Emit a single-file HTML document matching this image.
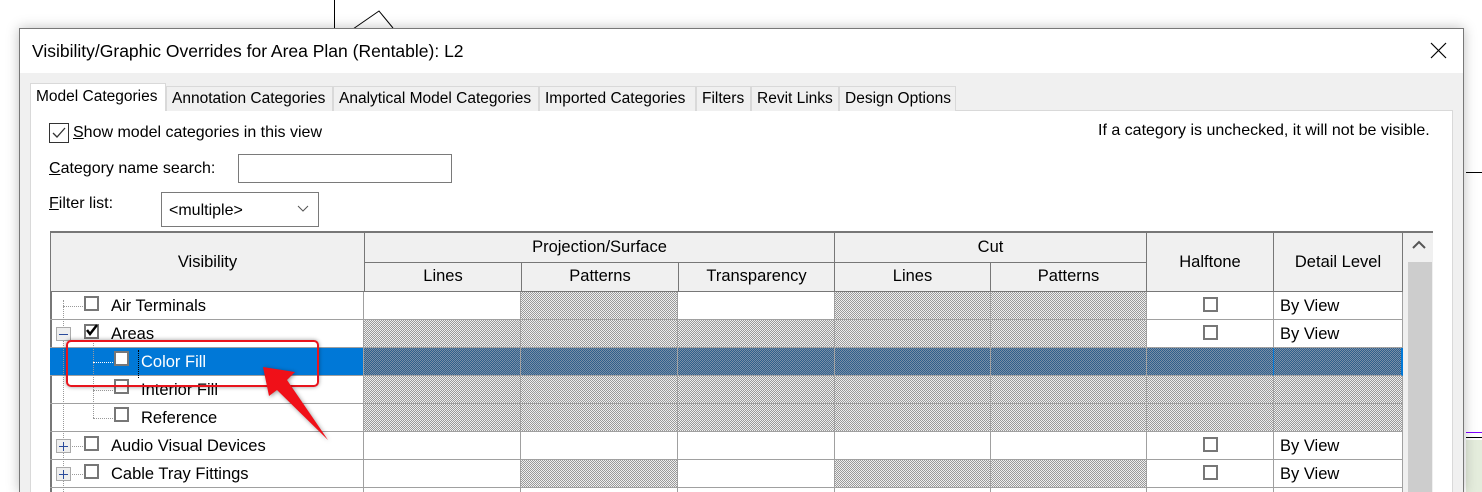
<!DOCTYPE html>
<html style="width:1482px;height:492px;overflow:hidden"><head><meta charset="utf-8"><style>
*{box-sizing:border-box;margin:0;padding:0}
body{width:1482px;height:492px;overflow:hidden;background:#fff;font-family:"Liberation Sans",sans-serif;font-size:16px;color:#000;position:relative}
.a{position:absolute}
.dlg{left:19px;top:28px;width:1445px;height:464px;border:1px solid #777;border-bottom:none;background:#f0f0f0;box-shadow:0 0 12px rgba(0,0,0,.25)}
.tb{left:0;top:0;width:1443px;height:44px;background:#fff}
.tab{top:57px;height:25px;border:1px solid #d9d9d9;border-bottom:none;background:#f0f0f0;padding:3px 0 0 5px;font-size:15.5px;white-space:nowrap}
.panel{left:10px;top:81px;width:1423px;height:383px;background:#fff;border:1px solid #d9d9d9;border-bottom:none}
.cb{width:15px;height:15px;border:2px solid #777;background:#fff}
.row{position:absolute;left:50px;height:28px;display:flex}
.c{height:28px;border-right:1px solid #a0a0a0;border-bottom:1px solid #a0a0a0;position:relative;font-size:16.5px}
.h{background:repeating-conic-gradient(#9a9a9a 0 25%,#efefef 0 50%) 0 0/2px 2px}
.hs{background:repeating-conic-gradient(#2f5f8c 0 25%,#7a8fa6 0 50%) 0 0/2px 2px}
.w0{width:314px}.w1{width:157px}.w4{width:156px}.w6{width:127px}.w7{width:129px}
.hc{position:absolute;background:#f0f0f0;border-right:1px solid #777;border-bottom:1px solid #777;text-align:center;font-size:16.5px}
.bv{padding:5px 0 0 6px}
.hb{position:absolute;left:56px;top:5px}
.dot{position:absolute;border-color:#999;border-style:dotted;border-width:0}
</style></head><body>
<div class="a" style="left:334px;top:0;width:1px;height:28px;background:#000"></div>
<svg class="a" style="left:350px;top:8px" width="50" height="22"><path d="M3 21 L29 3 L43 20" fill="none" stroke="#000"/></svg>
<div class="a" style="left:1466px;top:172px;width:16px;height:1px;background:#000"></div>
<div class="a" style="left:1466px;top:432px;width:16px;height:1px;background:#8000ff"></div>
<div class="a" style="left:1466px;top:437px;width:16px;height:1px;background:#000"></div>
<div class="a" style="left:1466px;top:440px;width:16px;height:52px;background:#e4ecdc"></div>

<div class="a dlg">
 <div class="a tb"></div>
 <div class="a" style="left:12px;top:12px;font-size:17.5px;white-space:nowrap">Visibility/Graphic Overrides for Area Plan (Rentable): L2</div>
 <svg class="a" style="left:1410px;top:13px" width="18" height="18"><path d="M1 1L16 16M16 1L1 16" stroke="#000" stroke-width="1.2"/></svg>
 <div class="a panel"></div>
 <div class="a tab" style="left:10px;top:54px;height:28px;width:136px;background:#fff;border-color:#d9d9d9;padding-top:4px">Model Categories</div>
 <div class="a tab" style="left:146px;width:167px">Annotation Categories</div>
 <div class="a tab" style="left:313px;width:206px">Analytical Model Categories</div>
 <div class="a tab" style="left:519px;width:157px">Imported Categories</div>
 <div class="a tab" style="left:676px;width:55px">Filters</div>
 <div class="a tab" style="left:731px;width:88px">Revit Links</div>
 <div class="a tab" style="left:819px;width:117px">Design Options</div>
</div>

<div class="a" style="left:49px;top:123px;width:20px;height:20px;border:1px solid #333;background:#fff"></div>
<svg class="a" style="left:51px;top:126px" width="16" height="14"><path d="M2 7L6 11L14 2" fill="none" stroke="#333" stroke-width="1.3"/></svg>
<div class="a" style="left:73px;top:124px;font-size:16px"><u>S</u>how model categories in this view</div>
<div class="a" style="left:1098px;top:122px;font-size:16px">If a category is unchecked, it will not be visible.</div>
<div class="a" style="left:49px;top:160px;font-size:16px"><u>C</u>ategory name search:</div>
<div class="a" style="left:238px;top:154px;width:214px;height:29px;border:1px solid #7a7a7a"></div>
<div class="a" style="left:49px;top:195px;font-size:16px"><u>F</u>ilter list:</div>
<div class="a" style="left:161px;top:192px;width:158px;height:35px;border:1px solid #7a7a7a;padding:9px 0 0 7px;font-size:16px">&lt;multiple&gt;</div>
<svg class="a" style="left:297px;top:204px" width="14" height="10"><path d="M1 2L6 7L11 2" fill="none" stroke="#555"/></svg>

<div class="a" style="left:50px;top:231px;width:1383px;height:261px;border-top:2px solid #777;border-left:2px solid #777"></div>
<div class="hc" style="left:51px;top:233px;width:314px;height:59px;padding-top:20px">Visibility</div>
<div class="hc" style="left:365px;top:233px;width:470px;height:30px;padding-top:5px">Projection/Surface</div>
<div class="hc" style="left:365px;top:263px;width:157px;height:29px;padding-top:4px">Lines</div>
<div class="hc" style="left:522px;top:263px;width:157px;height:29px;padding-top:4px">Patterns</div>
<div class="hc" style="left:679px;top:263px;width:156px;height:29px;padding-top:4px">Transparency</div>
<div class="hc" style="left:835px;top:233px;width:312px;height:30px;padding-top:5px">Cut</div>
<div class="hc" style="left:835px;top:263px;width:156px;height:29px;padding-top:4px">Lines</div>
<div class="hc" style="left:991px;top:263px;width:156px;height:29px;padding-top:4px">Patterns</div>
<div class="hc" style="left:1147px;top:233px;width:127px;height:59px;padding-top:20px">Halftone</div>
<div class="hc" style="left:1274px;top:233px;width:129px;height:59px;padding-top:20px">Detail Level</div>
<div class="a" style="left:1403px;top:233px;width:30px;height:259px;background:#f0f0f0"></div>
<div class="a" style="left:1408px;top:262px;width:24px;height:230px;background:#cdcdcd"></div>
<svg class="a" style="left:1412px;top:240px" width="14" height="10"><path d="M1 8L7 2L13 8" fill="none" stroke="#555" stroke-width="2"/></svg>

<div class="row" style="top:292px"><div class="c w0"></div><div class="c w1"></div><div class="c w1 h"></div><div class="c w1"></div><div class="c w4 h"></div><div class="c w4 h"></div><div class="c w6"><div class="cb hb"></div></div><div class="c w7 bv">By View</div></div>
<div class="row" style="top:320px"><div class="c w0"></div><div class="c w1 h"></div><div class="c w1 h"></div><div class="c w1 h"></div><div class="c w4 h"></div><div class="c w4 h"></div><div class="c w6"><div class="cb hb"></div></div><div class="c w7 bv">By View</div></div>
<div class="row" style="top:348px;background:#0078d7"><div class="c w0" style="background:#0078d7"></div><div class="c w1 hs"></div><div class="c w1 hs"></div><div class="c w1 hs"></div><div class="c w4 hs"></div><div class="c w4 hs"></div><div class="c w6 hs" style="border-right-color:#0078d7"></div><div class="c w7 hs" style="border-right:2px solid #0078d7"></div></div>
<div class="row" style="top:376px"><div class="c w0"></div><div class="c w1 h"></div><div class="c w1 h"></div><div class="c w1 h"></div><div class="c w4 h"></div><div class="c w4 h"></div><div class="c w6 h"></div><div class="c w7 h"></div></div>
<div class="row" style="top:404px"><div class="c w0"></div><div class="c w1 h"></div><div class="c w1 h"></div><div class="c w1 h"></div><div class="c w4 h"></div><div class="c w4 h"></div><div class="c w6 h"></div><div class="c w7 h"></div></div>
<div class="row" style="top:432px"><div class="c w0"></div><div class="c w1"></div><div class="c w1"></div><div class="c w1"></div><div class="c w4"></div><div class="c w4"></div><div class="c w6"><div class="cb hb"></div></div><div class="c w7 bv">By View</div></div>
<div class="row" style="top:460px"><div class="c w0"></div><div class="c w1"></div><div class="c w1 h"></div><div class="c w1"></div><div class="c w4 h"></div><div class="c w4 h"></div><div class="c w6"><div class="cb hb"></div></div><div class="c w7 bv">By View</div></div>
<div class="row" style="top:488px;height:4px;overflow:hidden"><div class="c w0"></div><div class="c w1"></div><div class="c w1"></div><div class="c w1"></div><div class="c w4"></div><div class="c w4"></div><div class="c w6"></div><div class="c w7"></div></div>

<div class="dot" style="left:63px;top:300px;height:192px;border-left-width:1px"></div>
<div class="dot" style="left:63px;top:306px;width:20px;border-top-width:1px"></div>
<div class="dot" style="left:93px;top:340px;height:78px;border-left-width:1px"></div>
<div class="dot" style="left:93px;top:362px;width:20px;border-top-width:1px;border-color:#fff"></div>
<div class="dot" style="left:93px;top:390px;width:20px;border-top-width:1px"></div>
<div class="dot" style="left:93px;top:418px;width:20px;border-top-width:1px"></div>
<div class="dot" style="left:63px;top:446px;width:20px;border-top-width:1px"></div>
<div class="dot" style="left:63px;top:474px;width:20px;border-top-width:1px"></div>
<div class="a" style="left:56px;top:327px;width:15px;height:14px;border:1px solid #aaa;background:#eee"><div class="a" style="left:2px;top:6px;width:9px;height:1px;background:#2b4b9b"></div></div>
<div class="a" style="left:56px;top:439px;width:15px;height:14px;border:1px solid #aaa;background:#eee"><div class="a" style="left:2px;top:6px;width:9px;height:1px;background:#2b4b9b"></div><div class="a" style="left:6px;top:2px;width:1px;height:9px;background:#2b4b9b"></div></div>
<div class="a" style="left:56px;top:467px;width:15px;height:14px;border:1px solid #aaa;background:#eee"><div class="a" style="left:2px;top:6px;width:9px;height:1px;background:#2b4b9b"></div><div class="a" style="left:6px;top:2px;width:1px;height:9px;background:#2b4b9b"></div></div>

<div class="a cb" style="left:84px;top:296px"></div><div class="a" style="left:111px;top:297px;font-size:16.5px">Air Terminals</div>
<div class="a cb" style="left:84px;top:324px"></div>
<svg class="a" style="left:85px;top:324px" width="14" height="13"><path d="M2 6L5 10L12 1" fill="none" stroke="#000" stroke-width="2.5"/></svg>
<div class="a" style="left:111px;top:325px;font-size:16.5px">Areas</div>
<div class="a cb" style="left:114px;top:351px"></div><div class="a" style="left:138px;top:350px;height:28px;border-left:1px dotted #000"></div><div class="a" style="left:141px;top:353px;font-size:16.5px;color:#fff">Color Fill</div>
<div class="a cb" style="left:114px;top:379px"></div><div class="a" style="left:141px;top:381px;font-size:16.5px">Interior Fill</div>
<div class="a cb" style="left:114px;top:407px"></div><div class="a" style="left:141px;top:409px;font-size:16.5px">Reference</div>
<div class="a cb" style="left:84px;top:436px"></div><div class="a" style="left:111px;top:437px;font-size:16.5px">Audio Visual Devices</div>
<div class="a cb" style="left:84px;top:464px"></div><div class="a" style="left:111px;top:465px;font-size:16.5px">Cable Tray Fittings</div>

<div class="a" style="left:66px;top:340px;width:253px;height:47px;border:2px solid #e8141c;border-radius:5px;box-shadow:0 0 4px rgba(0,0,0,.4)"></div>
<svg class="a" style="left:255px;top:360px" width="80" height="85"><path d="M8 7 L40 12 L32 20 L73 80 L22 30 L14 36 Z" fill="#f01018" style="filter:drop-shadow(1px 1px 2px rgba(0,0,0,.4))"/></svg>
</body></html>
